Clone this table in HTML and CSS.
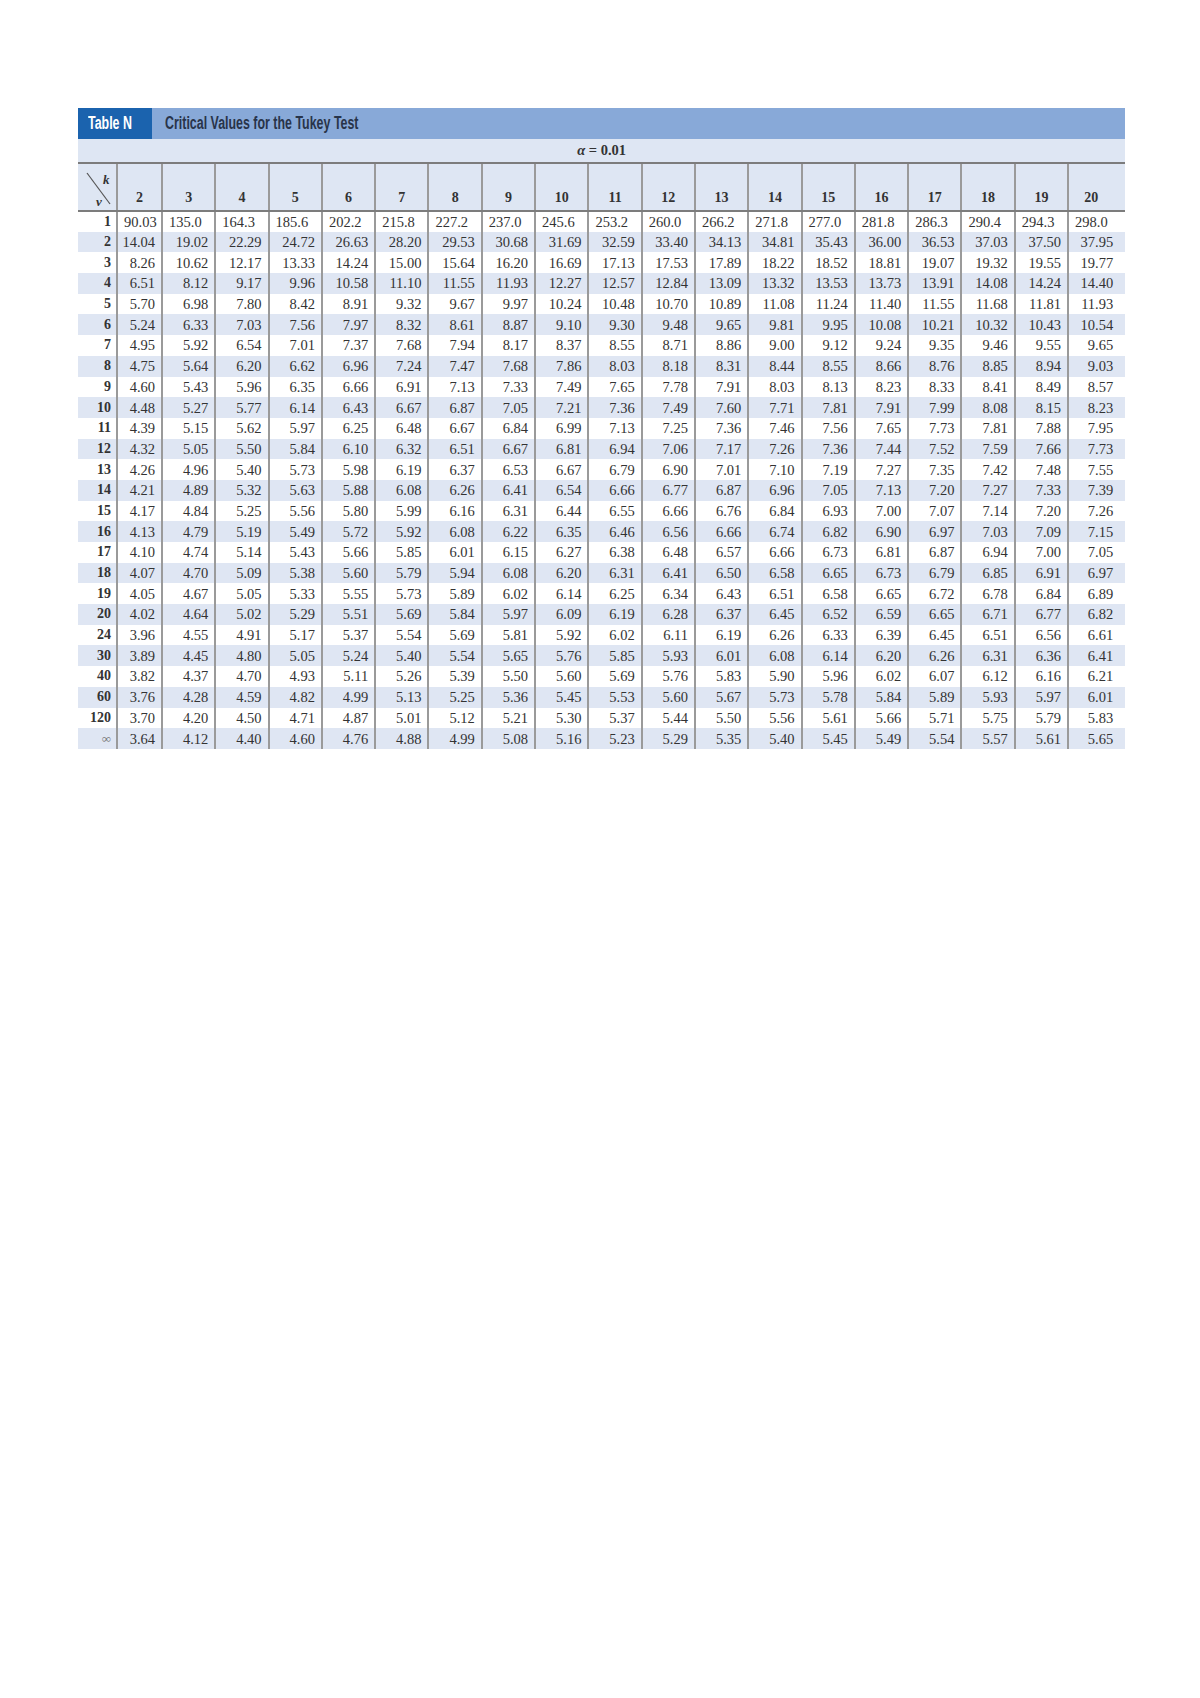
FILE: index.html
```html
<!DOCTYPE html>
<html lang="en">
<head>
<meta charset="utf-8">
<title>Table N Critical Values for the Tukey Test</title>
<link rel="stylesheet" href="styles.css">
</head>
<body>
<div class="sheet">
  <div class="title-bar">
    <div class="tag"><span class="cond">Table N</span></div>
    <div class="title"><span class="cond">Critical Values for the Tukey Test</span></div>
  </div>
  <table class="tukey">
    <colgroup>
      <col class="c-v"><col class="c-2">
      <col class="c-n"><col class="c-n"><col class="c-n"><col class="c-n"><col class="c-n"><col class="c-n"><col class="c-n"><col class="c-n"><col class="c-n"><col class="c-n"><col class="c-n"><col class="c-n"><col class="c-n"><col class="c-n"><col class="c-n"><col class="c-n"><col class="c-n">
      <col class="c-last">
    </colgroup>
    <thead>
      <tr class="alpha-row"><th colspan="20"><i>α</i> = 0.01</th></tr>
      <tr class="k-row">
        <th class="corner">
          <svg class="diag" width="39" height="46" viewBox="0 0 39 46"><line x1="9" y1="8" x2="32" y2="39" stroke="#555" stroke-width="1.2"/></svg>
          <span class="k">k</span><span class="v">ν</span>
        </th>
        <th>2</th><th>3</th><th>4</th><th>5</th><th>6</th><th>7</th><th>8</th><th>9</th><th>10</th><th>11</th><th>12</th><th>13</th><th>14</th><th>15</th><th>16</th><th>17</th><th>18</th><th>19</th><th>20</th>
      </tr>
    </thead>
    <tbody>
      <tr class="first"><th>1</th><td>90.03</td><td>135.0</td><td>164.3</td><td>185.6</td><td>202.2</td><td>215.8</td><td>227.2</td><td>237.0</td><td>245.6</td><td>253.2</td><td>260.0</td><td>266.2</td><td>271.8</td><td>277.0</td><td>281.8</td><td>286.3</td><td>290.4</td><td>294.3</td><td>298.0</td></tr>
      <tr><th>2</th><td>14.04</td><td>19.02</td><td>22.29</td><td>24.72</td><td>26.63</td><td>28.20</td><td>29.53</td><td>30.68</td><td>31.69</td><td>32.59</td><td>33.40</td><td>34.13</td><td>34.81</td><td>35.43</td><td>36.00</td><td>36.53</td><td>37.03</td><td>37.50</td><td>37.95</td></tr>
      <tr><th>3</th><td>8.26</td><td>10.62</td><td>12.17</td><td>13.33</td><td>14.24</td><td>15.00</td><td>15.64</td><td>16.20</td><td>16.69</td><td>17.13</td><td>17.53</td><td>17.89</td><td>18.22</td><td>18.52</td><td>18.81</td><td>19.07</td><td>19.32</td><td>19.55</td><td>19.77</td></tr>
      <tr><th>4</th><td>6.51</td><td>8.12</td><td>9.17</td><td>9.96</td><td>10.58</td><td>11.10</td><td>11.55</td><td>11.93</td><td>12.27</td><td>12.57</td><td>12.84</td><td>13.09</td><td>13.32</td><td>13.53</td><td>13.73</td><td>13.91</td><td>14.08</td><td>14.24</td><td>14.40</td></tr>
      <tr><th>5</th><td>5.70</td><td>6.98</td><td>7.80</td><td>8.42</td><td>8.91</td><td>9.32</td><td>9.67</td><td>9.97</td><td>10.24</td><td>10.48</td><td>10.70</td><td>10.89</td><td>11.08</td><td>11.24</td><td>11.40</td><td>11.55</td><td>11.68</td><td>11.81</td><td>11.93</td></tr>
      <tr><th>6</th><td>5.24</td><td>6.33</td><td>7.03</td><td>7.56</td><td>7.97</td><td>8.32</td><td>8.61</td><td>8.87</td><td>9.10</td><td>9.30</td><td>9.48</td><td>9.65</td><td>9.81</td><td>9.95</td><td>10.08</td><td>10.21</td><td>10.32</td><td>10.43</td><td>10.54</td></tr>
      <tr><th>7</th><td>4.95</td><td>5.92</td><td>6.54</td><td>7.01</td><td>7.37</td><td>7.68</td><td>7.94</td><td>8.17</td><td>8.37</td><td>8.55</td><td>8.71</td><td>8.86</td><td>9.00</td><td>9.12</td><td>9.24</td><td>9.35</td><td>9.46</td><td>9.55</td><td>9.65</td></tr>
      <tr><th>8</th><td>4.75</td><td>5.64</td><td>6.20</td><td>6.62</td><td>6.96</td><td>7.24</td><td>7.47</td><td>7.68</td><td>7.86</td><td>8.03</td><td>8.18</td><td>8.31</td><td>8.44</td><td>8.55</td><td>8.66</td><td>8.76</td><td>8.85</td><td>8.94</td><td>9.03</td></tr>
      <tr><th>9</th><td>4.60</td><td>5.43</td><td>5.96</td><td>6.35</td><td>6.66</td><td>6.91</td><td>7.13</td><td>7.33</td><td>7.49</td><td>7.65</td><td>7.78</td><td>7.91</td><td>8.03</td><td>8.13</td><td>8.23</td><td>8.33</td><td>8.41</td><td>8.49</td><td>8.57</td></tr>
      <tr><th>10</th><td>4.48</td><td>5.27</td><td>5.77</td><td>6.14</td><td>6.43</td><td>6.67</td><td>6.87</td><td>7.05</td><td>7.21</td><td>7.36</td><td>7.49</td><td>7.60</td><td>7.71</td><td>7.81</td><td>7.91</td><td>7.99</td><td>8.08</td><td>8.15</td><td>8.23</td></tr>
      <tr><th>11</th><td>4.39</td><td>5.15</td><td>5.62</td><td>5.97</td><td>6.25</td><td>6.48</td><td>6.67</td><td>6.84</td><td>6.99</td><td>7.13</td><td>7.25</td><td>7.36</td><td>7.46</td><td>7.56</td><td>7.65</td><td>7.73</td><td>7.81</td><td>7.88</td><td>7.95</td></tr>
      <tr><th>12</th><td>4.32</td><td>5.05</td><td>5.50</td><td>5.84</td><td>6.10</td><td>6.32</td><td>6.51</td><td>6.67</td><td>6.81</td><td>6.94</td><td>7.06</td><td>7.17</td><td>7.26</td><td>7.36</td><td>7.44</td><td>7.52</td><td>7.59</td><td>7.66</td><td>7.73</td></tr>
      <tr><th>13</th><td>4.26</td><td>4.96</td><td>5.40</td><td>5.73</td><td>5.98</td><td>6.19</td><td>6.37</td><td>6.53</td><td>6.67</td><td>6.79</td><td>6.90</td><td>7.01</td><td>7.10</td><td>7.19</td><td>7.27</td><td>7.35</td><td>7.42</td><td>7.48</td><td>7.55</td></tr>
      <tr><th>14</th><td>4.21</td><td>4.89</td><td>5.32</td><td>5.63</td><td>5.88</td><td>6.08</td><td>6.26</td><td>6.41</td><td>6.54</td><td>6.66</td><td>6.77</td><td>6.87</td><td>6.96</td><td>7.05</td><td>7.13</td><td>7.20</td><td>7.27</td><td>7.33</td><td>7.39</td></tr>
      <tr><th>15</th><td>4.17</td><td>4.84</td><td>5.25</td><td>5.56</td><td>5.80</td><td>5.99</td><td>6.16</td><td>6.31</td><td>6.44</td><td>6.55</td><td>6.66</td><td>6.76</td><td>6.84</td><td>6.93</td><td>7.00</td><td>7.07</td><td>7.14</td><td>7.20</td><td>7.26</td></tr>
      <tr><th>16</th><td>4.13</td><td>4.79</td><td>5.19</td><td>5.49</td><td>5.72</td><td>5.92</td><td>6.08</td><td>6.22</td><td>6.35</td><td>6.46</td><td>6.56</td><td>6.66</td><td>6.74</td><td>6.82</td><td>6.90</td><td>6.97</td><td>7.03</td><td>7.09</td><td>7.15</td></tr>
      <tr><th>17</th><td>4.10</td><td>4.74</td><td>5.14</td><td>5.43</td><td>5.66</td><td>5.85</td><td>6.01</td><td>6.15</td><td>6.27</td><td>6.38</td><td>6.48</td><td>6.57</td><td>6.66</td><td>6.73</td><td>6.81</td><td>6.87</td><td>6.94</td><td>7.00</td><td>7.05</td></tr>
      <tr><th>18</th><td>4.07</td><td>4.70</td><td>5.09</td><td>5.38</td><td>5.60</td><td>5.79</td><td>5.94</td><td>6.08</td><td>6.20</td><td>6.31</td><td>6.41</td><td>6.50</td><td>6.58</td><td>6.65</td><td>6.73</td><td>6.79</td><td>6.85</td><td>6.91</td><td>6.97</td></tr>
      <tr><th>19</th><td>4.05</td><td>4.67</td><td>5.05</td><td>5.33</td><td>5.55</td><td>5.73</td><td>5.89</td><td>6.02</td><td>6.14</td><td>6.25</td><td>6.34</td><td>6.43</td><td>6.51</td><td>6.58</td><td>6.65</td><td>6.72</td><td>6.78</td><td>6.84</td><td>6.89</td></tr>
      <tr><th>20</th><td>4.02</td><td>4.64</td><td>5.02</td><td>5.29</td><td>5.51</td><td>5.69</td><td>5.84</td><td>5.97</td><td>6.09</td><td>6.19</td><td>6.28</td><td>6.37</td><td>6.45</td><td>6.52</td><td>6.59</td><td>6.65</td><td>6.71</td><td>6.77</td><td>6.82</td></tr>
      <tr><th>24</th><td>3.96</td><td>4.55</td><td>4.91</td><td>5.17</td><td>5.37</td><td>5.54</td><td>5.69</td><td>5.81</td><td>5.92</td><td>6.02</td><td>6.11</td><td>6.19</td><td>6.26</td><td>6.33</td><td>6.39</td><td>6.45</td><td>6.51</td><td>6.56</td><td>6.61</td></tr>
      <tr><th>30</th><td>3.89</td><td>4.45</td><td>4.80</td><td>5.05</td><td>5.24</td><td>5.40</td><td>5.54</td><td>5.65</td><td>5.76</td><td>5.85</td><td>5.93</td><td>6.01</td><td>6.08</td><td>6.14</td><td>6.20</td><td>6.26</td><td>6.31</td><td>6.36</td><td>6.41</td></tr>
      <tr><th>40</th><td>3.82</td><td>4.37</td><td>4.70</td><td>4.93</td><td>5.11</td><td>5.26</td><td>5.39</td><td>5.50</td><td>5.60</td><td>5.69</td><td>5.76</td><td>5.83</td><td>5.90</td><td>5.96</td><td>6.02</td><td>6.07</td><td>6.12</td><td>6.16</td><td>6.21</td></tr>
      <tr><th>60</th><td>3.76</td><td>4.28</td><td>4.59</td><td>4.82</td><td>4.99</td><td>5.13</td><td>5.25</td><td>5.36</td><td>5.45</td><td>5.53</td><td>5.60</td><td>5.67</td><td>5.73</td><td>5.78</td><td>5.84</td><td>5.89</td><td>5.93</td><td>5.97</td><td>6.01</td></tr>
      <tr><th>120</th><td>3.70</td><td>4.20</td><td>4.50</td><td>4.71</td><td>4.87</td><td>5.01</td><td>5.12</td><td>5.21</td><td>5.30</td><td>5.37</td><td>5.44</td><td>5.50</td><td>5.56</td><td>5.61</td><td>5.66</td><td>5.71</td><td>5.75</td><td>5.79</td><td>5.83</td></tr>
      <tr><th class="inf">∞</th><td>3.64</td><td>4.12</td><td>4.40</td><td>4.60</td><td>4.76</td><td>4.88</td><td>4.99</td><td>5.08</td><td>5.16</td><td>5.23</td><td>5.29</td><td>5.35</td><td>5.40</td><td>5.45</td><td>5.49</td><td>5.54</td><td>5.57</td><td>5.61</td><td>5.65</td></tr>
    </tbody>
  </table>
</div>
</body>
</html>
```
FILE: styles.css
```css
* { box-sizing: border-box; }

html, body {
  margin: 0;
  padding: 0;
  background: #ffffff;
}

body {
  font-family: "Liberation Serif", "Times New Roman", serif;
  color: #333333;
}

.sheet {
  padding: 108px 0 0 78px;
  width: 1200px;
}

/* ---------- title bar ---------- */
.title-bar {
  display: flex;
  width: 1047px;
  height: 31px;
  background: #88a9d8;
  font-family: "Liberation Sans", Arial, sans-serif;
  font-weight: bold;
  font-size: 18px;
  line-height: 31px;
  overflow: hidden;
}

.tag {
  flex: 0 0 69px;
  background: #1b63ae;
  color: #ffffff;
  padding-left: 10px;
}

.title {
  flex: 1;
  color: #28344a;
  padding-left: 13px;
}

.cond {
  display: inline-block;
  transform: scaleX(0.69);
  transform-origin: left center;
  white-space: nowrap;
}

/* ---------- table ---------- */
.tukey {
  width: 1047px;
  table-layout: fixed;
  border-collapse: collapse;
  border-spacing: 0;
  font-size: 14.5px;
}

.c-v { width: 39px; }
.c-2 { width: 45px; }
.c-n { width: 53.3px; }
.c-last { width: 57px; }

.alpha-row th {
  height: 24px;
  background: #dee6f3;
  font-size: 14.5px;
  font-weight: bold;
  text-align: center;
  padding: 0;
  color: #333;
}

.k-row th {
  height: 48px;
  background: #dee6f3;
  border-top: 2px solid #7c7c7c;
  border-bottom: 2px solid #7c7c7c;
  border-left: 2px solid #9a9a9a;
  vertical-align: bottom;
  text-align: center;
  font-size: 14px;
  font-weight: bold;
  padding: 0 0 4px 0;
  color: #333;
}

.k-row th:last-child {
  padding-right: 12px;
}

.k-row th.corner {
  border-left: none;
  position: relative;
  padding: 0;
}

.diag {
  position: absolute;
  left: 0;
  top: 1px;
}

.corner .k,
.corner .v {
  position: absolute;
  font-style: italic;
  font-weight: bold;
  font-size: 13px;
  line-height: 13px;
}

.corner .k { left: 25px; top: 9px; }
.corner .v { left: 18px; top: 31px; }

tbody tr {
  height: 20.7px;
}

tbody tr:nth-child(even) {
  background: #dfe6f3;
}

tbody td,
tbody th {
  padding: 0 6px 0 0;
  text-align: right;
  white-space: nowrap;
  line-height: 16px;
  vertical-align: middle;
}

tbody td {
  border-left: 2px solid #9a9a9a;
  font-weight: normal;
}

tbody td:last-child {
  padding-right: 12px;
}

tbody th {
  font-weight: bold;
  font-size: 14px;
  padding-right: 5px;
}

tbody th.inf {
  font-weight: normal;
  font-size: 13px;
  color: #777777;
}

tbody tr.first td {
  text-align: left;
  padding: 0 0 0 6px;
}
```
